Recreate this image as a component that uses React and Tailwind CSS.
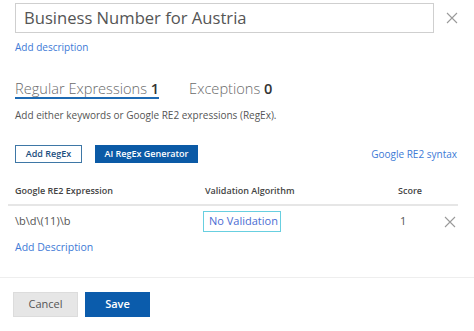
export default function App() {
  const XIcon = ({ size = 12, color = '#9a9a9a' }) => (
    <svg width={size} height={size} viewBox="0 0 12 12" fill="none">
      <path d="M1 1 L11 11 M11 1 L1 11" stroke={color} strokeWidth="1.1" />
    </svg>
  )

  return (
    <div className="w-[474px] h-[331px] bg-white overflow-hidden flex flex-col whitespace-nowrap" style={{ fontFamily: '"Open Sans", "Liberation Sans", sans-serif' }}>
      <div className="px-[15px] pt-[3px]">
        <div className="flex items-center">
          <div className="w-[419px] h-[30px] border border-[#cfcfcf] px-[8px] flex items-center text-[16.6px] text-[#555]">
            Business Number for Austria
          </div>
          <div className="ml-[12px]">
            <XIcon size={12} />
          </div>
        </div>
        <div className="mt-[7px] text-[10px] leading-[14px] text-[#3d7ad6]">Add description</div>

        <div className="mt-[25px] flex items-start gap-[30px]">
          <div className="flex flex-col">
            <span className="text-[14.6px] leading-[18px] text-[#6a6a6a] font-light">
              Regular Expressions <span className="font-semibold text-[#333]">1</span>
            </span>
            <div className="h-[2px] bg-[#1d6ab3]"></div>
          </div>
          <span className="text-[14.6px] leading-[18px] text-[#6a6a6a] font-light">
            Exceptions <span className="font-semibold text-[#333]">0</span>
          </span>
        </div>

        <div className="mt-[9px] text-[10px] leading-[14px] text-[#555]">
          Add either keywords or Google RE2 expressions (RegEx).
        </div>

        <div className="mt-[23px] flex items-center">
          <button className="h-[18px] w-[67px] border border-[#3e77a6] text-[9px] font-semibold text-[#1c4e7e] flex items-center justify-center">
            Add RegEx
          </button>
          <button className="ml-[13px] h-[18px] w-[103px] bg-[#0b5aa6] text-[9px] font-semibold text-white flex items-center justify-center">
            AI RegEx Generator
          </button>
          <span className="ml-auto mr-[2px] text-[10px] text-[#3d7ad6]">Google RE2 syntax</span>
        </div>
      </div>

      <div className="mt-[20px] px-[8px]">
        <div className="flex items-center h-[16px] px-[7px] text-[9px] font-semibold text-[#444]">
          <span className="w-[190px]">Google RE2 Expression</span>
          <span className="w-[193px]">Validation Algorithm</span>
          <span>Score</span>
        </div>
        <div className="mt-[5px] h-[2px] w-[450px] bg-[#e6e6e6]"></div>
        <div className="mt-[5px] flex items-center h-[21px] pl-[7px] text-[11px] text-[#555]">
          <span className="w-[188px]">\b\d\(11)\b</span>
          <div className="w-[78px] h-[21px] border border-[#68cfe0] flex items-center pl-[5px] text-[#4a6dd3]">
            No Validation
          </div>
          <span className="ml-[119px] w-[44px]">1</span>
          <XIcon size={12} />
        </div>
      </div>

      <div className="px-[15px] mt-[7px] text-[10.5px] leading-[16px] text-[#3d7ad6]">Add Description</div>

      <div className="mt-[22px] h-px bg-[#eeeeee]"></div>

      <div className="mt-[14px] px-[13px] flex gap-[7px]">
        <button className="w-[65px] h-[25px] bg-[#e6e6e6] border border-[#dcdcdc] text-[11px] text-[#555]">Cancel</button>
        <button className="w-[65px] h-[25px] bg-[#0b5cac] text-[11px] font-semibold text-white">Save</button>
      </div>
    </div>
  )
}
